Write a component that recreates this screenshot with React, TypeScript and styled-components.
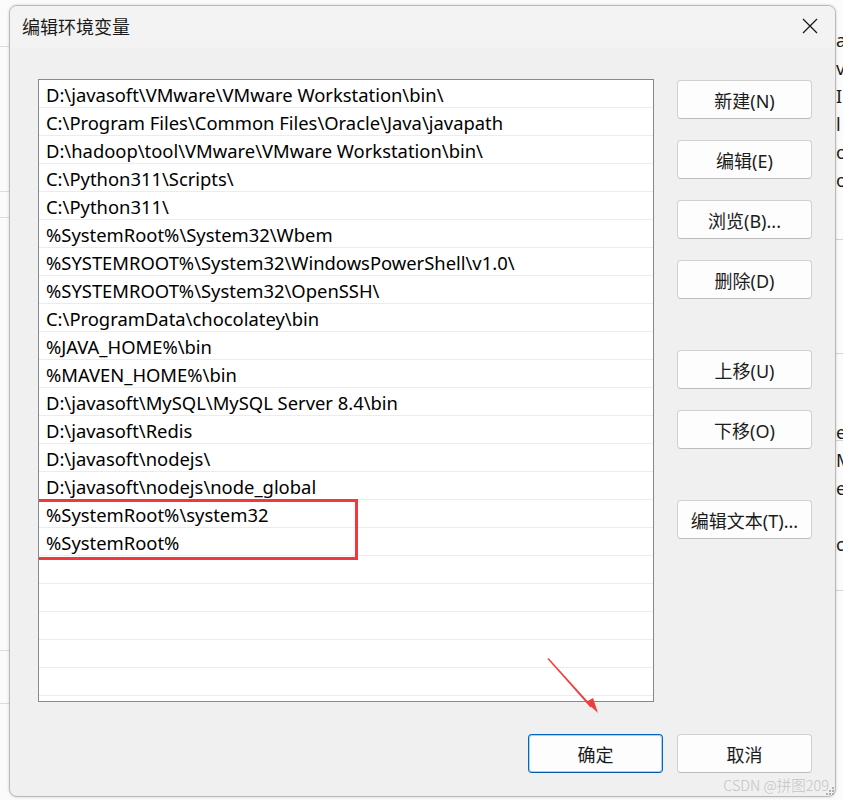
import styled, { createGlobalStyle } from 'styled-components';

const paths = [
  'D:\\javasoft\\VMware\\VMware Workstation\\bin\\',
  'C:\\Program Files\\Common Files\\Oracle\\Java\\javapath',
  'D:\\hadoop\\tool\\VMware\\VMware Workstation\\bin\\',
  'C:\\Python311\\Scripts\\',
  'C:\\Python311\\',
  '%SystemRoot%\\System32\\Wbem',
  '%SYSTEMROOT%\\System32\\WindowsPowerShell\\v1.0\\',
  '%SYSTEMROOT%\\System32\\OpenSSH\\',
  'C:\\ProgramData\\chocolatey\\bin',
  '%JAVA_HOME%\\bin',
  '%MAVEN_HOME%\\bin',
  'D:\\javasoft\\MySQL\\MySQL Server 8.4\\bin',
  'D:\\javasoft\\Redis',
  'D:\\javasoft\\nodejs\\',
  'D:\\javasoft\\nodejs\\node_global',
  '%SystemRoot%\\system32',
  '%SystemRoot%',
  '',
  '',
  '',
  '',
  '',
];

const sideButtons = [
  { label: '新建(N)' },
  { label: '编辑(E)' },
  { label: '浏览(B)...' },
  { label: '删除(D)' },
  { label: '上移(U)', spaced: true },
  { label: '下移(O)' },
  { label: '编辑文本(T)...', spaced: true },
];

// bits of the window behind the dialog, peeking out on the right
const behindLines = ['at', 'v', 'ID', 'l', 'op', 'op', '', '', '', '', '', '', '', '', 'e', 'M', 'e', '', 'c'];

const GlobalStyle = createGlobalStyle`
  html, body {
    margin: 0;
    padding: 0;
    background: #fbfbfb;
    font-family: "Noto Sans", "Noto Sans CJK SC", sans-serif;
  }
`;

const Desktop = styled.div`
  width: 843px;
  height: 800px;
  position: relative;
  overflow: hidden;
  background:
    linear-gradient(#dcdcdc, #dcdcdc) 0 46px / 9px 1px no-repeat,
    linear-gradient(#dcdcdc, #dcdcdc) 0 191px / 9px 1px no-repeat,
    linear-gradient(#dcdcdc, #dcdcdc) 0 217px / 9px 1px no-repeat,
    linear-gradient(#dcdcdc, #dcdcdc) 0 650px / 9px 1px no-repeat,
    linear-gradient(#dcdcdc, #dcdcdc) 0 703px / 9px 1px no-repeat,
    linear-gradient(#d4d4d4, #d4d4d4) 836px 239px / 7px 1px no-repeat,
    linear-gradient(#d4d4d4, #d4d4d4) 836px 353px / 7px 1px no-repeat,
    linear-gradient(#d4d4d4, #d4d4d4) 836px 440px / 7px 1px no-repeat,
    linear-gradient(#d4d4d4, #d4d4d4) 836px 590px / 7px 1px no-repeat,
    #fbfbfb;
`;

const BehindPane = styled.div`
  position: absolute;
  left: 836px;
  top: 27px;
  width: 7px;
  overflow: hidden;
  display: flex;
  flex-direction: column;
`;

const BehindLine = styled.div`
  height: 28px;
  font-size: 18px;
  line-height: 26px;
  color: #1a1a1a;
  white-space: nowrap;
`;

const Window = styled.div`
  position: absolute;
  left: 9px;
  top: 5px;
  width: 827px;
  height: 792px;
  box-sizing: border-box;
  border: 1px solid #b9b9b9;
  border-radius: 8px;
  background: #f0f0f0;
  display: flex;
  flex-direction: column;
  overflow: hidden;
  box-shadow: 0 0 3px rgba(0, 0, 0, 0.18);
`;

const TitleBar = styled.div`
  height: 42px;
  flex: none;
  background: #f3f3f3;
  display: flex;
  align-items: center;
  justify-content: space-between;
  padding: 0 16px 0 12px;
`;

const Title = styled.span`
  font-size: 18px;
  color: #1a1a1a;
  margin-top: -2px;
`;

const CloseBtn = styled.div`
  width: 18px;
  height: 18px;
  display: flex;
  align-items: center;
  justify-content: center;
  margin-top: -2px;
`;

const Body = styled.div`
  flex: 1;
  display: flex;
  flex-direction: column;
  padding: 31px 23px 23px 28px;
`;

const Main = styled.div`
  display: flex;
  gap: 23px;
`;

const ListBox = styled.div`
  position: relative;
  width: 616px;
  height: 623px;
  box-sizing: border-box;
  border: 1px solid #868a8f;
  background: #ffffff;
  overflow: hidden;
`;

const Row = styled.div`
  height: 28px;
  box-sizing: border-box;
  border-bottom: 1px solid #ececec;
  padding: 1px 0 0 7px;
  font-size: 18.4px;
  line-height: 27px;
  color: #000000;
  white-space: nowrap;
`;

const Highlight = styled.div`
  position: absolute;
  left: -3px;
  top: 419px;
  width: 322px;
  height: 61px;
  box-sizing: border-box;
  border: 3px solid #f0393c;
`;

const SideColumn = styled.div`
  display: flex;
  flex-direction: column;
  gap: 21px;
  padding-top: 1px;
`;

const Button = styled.button<{ $spaced?: boolean; $primary?: boolean }>`
  width: 135px;
  height: 39px;
  margin-top: ${p => (p.$spaced ? '30px' : '0')};
  box-sizing: border-box;
  border: 1px solid ${p => (p.$primary ? '#0067c0' : '#d0d0d0')};
  border-bottom-color: ${p => (p.$primary ? '#0058a8' : '#bdbdbd')};
  box-shadow: ${p => (p.$primary ? 'inset 0 0 0 1px rgba(0, 103, 192, 0.3)' : 'none')};
  border-radius: 4px;
  background: #fdfdfd;
  font-family: "Noto Sans", "Noto Sans CJK SC", sans-serif;
  font-size: 18px;
  color: #1b1b1b;
  padding: 0;
  cursor: default;
`;

const Footer = styled.div`
  display: flex;
  justify-content: flex-end;
  gap: 14px;
  margin-top: 32px;
`;

const Arrow = styled.svg`
  position: absolute;
  left: 540px;
  top: 652px;
`;

const Watermark = styled.div`
  position: absolute;
  right: 14px;
  bottom: 5px;
  font-size: 14.5px;
  font-weight: 300;
  color: #c4c4c4;
  font-family: "Noto Sans CJK SC", sans-serif;
`;

const Grip = styled.svg`
  position: absolute;
  right: 8px;
  bottom: 4px;
`;

export default function App() {
  return (
    <>
      <GlobalStyle />
      <Desktop>
        <BehindPane>
          {behindLines.map((t, i) => (
            <BehindLine key={i}>{t}</BehindLine>
          ))}
        </BehindPane>
        <Window>
          <TitleBar>
            <Title>编辑环境变量</Title>
            <CloseBtn>
              <svg width="16" height="16" viewBox="0 0 16 16">
                <path d="M1 1 L15 15 M15 1 L1 15" stroke="#1a1a1a" strokeWidth="1.3" fill="none" />
              </svg>
            </CloseBtn>
          </TitleBar>
          <Body>
            <Main>
              <ListBox>
                {paths.map((p, i) => (
                  <Row key={i}>{p}</Row>
                ))}
                <Highlight />
              </ListBox>
              <SideColumn>
                {sideButtons.map(b => (
                  <Button key={b.label} $spaced={b.spaced}>
                    {b.label}
                  </Button>
                ))}
              </SideColumn>
            </Main>
            <Footer>
              <Button $primary>确定</Button>
              <Button>取消</Button>
            </Footer>
          </Body>
        </Window>
        <Arrow width="64" height="66" viewBox="0 0 64 66">
          <path d="M7.5 7 L8.5 6 L52 54 L50.5 55.5 Z" fill="#f03c3c" />
          <path d="M46 50 L58 61 L53 46 Z" fill="#f03c3c" />
        </Arrow>
        <Watermark>CSDN @拼图209</Watermark>
        <Grip width="10" height="10" viewBox="0 0 10 10">
          <rect x="7" y="1" width="2" height="2" fill="#b0b0b0" />
          <rect x="4" y="4" width="2" height="2" fill="#b0b0b0" />
          <rect x="7" y="4" width="2" height="2" fill="#b0b0b0" />
          <rect x="1" y="7" width="2" height="2" fill="#b0b0b0" />
          <rect x="4" y="7" width="2" height="2" fill="#b0b0b0" />
          <rect x="7" y="7" width="2" height="2" fill="#b0b0b0" />
        </Grip>
      </Desktop>
    </>
  );
}
